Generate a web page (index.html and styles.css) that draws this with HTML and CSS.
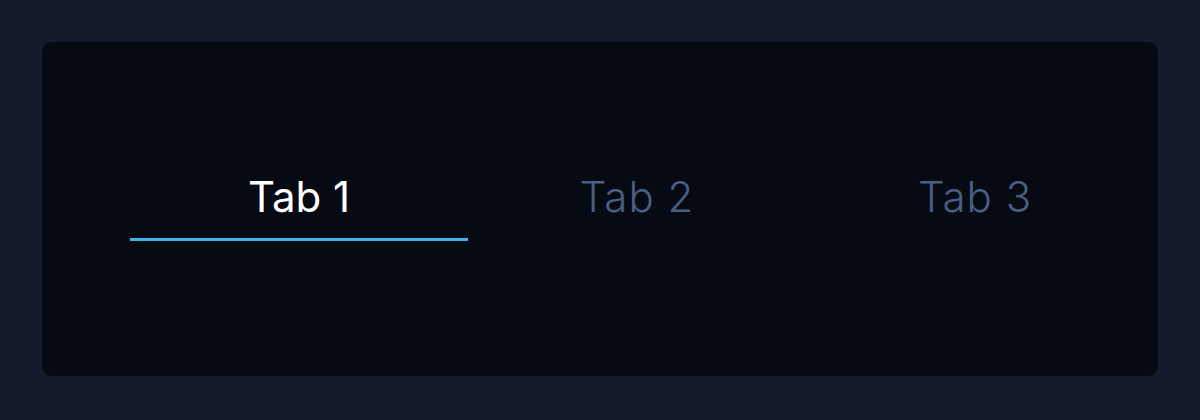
FILE: index.html
```html
<!DOCTYPE html>
<html lang="en">
<head>
<meta charset="utf-8">
<title>Tabs</title>
<link rel="stylesheet" href="styles.css">
</head>
<body>
  <div class="card">
    <div class="tabs" role="tablist">
      <button class="tab active" role="tab">Tab 1</button>
      <button class="tab" role="tab">Tab 2</button>
      <button class="tab" role="tab">Tab 3</button>
    </div>
  </div>
</body>
</html>
```

FILE: styles.css
```css
html, body {
  margin: 0;
  padding: 0;
}
body {
  background: #131b2d;
  padding: 42px;
  width: 1200px;
  height: 420px;
  box-sizing: border-box;
  font-family: Inter, "Noto Sans", sans-serif;
}
.card {
  background: #060a12;
  border-radius: 10px;
  height: 334px;
  box-sizing: border-box;
  padding: 130px 0 0 88px;
}
.tabs {
  display: grid;
  grid-template-columns: repeat(3, 338px);
}
.tab {
  background: none;
  border: 0;
  border-bottom: 3px solid transparent;
  padding: 0 0 16px 0;
  margin: 0;
  font-family: inherit;
  font-size: 42px;
  line-height: 50px;
  font-weight: 300;
  letter-spacing: 1px;
  color: #4a5e84;
  text-align: center;
  cursor: pointer;
}
.tab.active {
  color: #ffffff;
  font-weight: 400;
  letter-spacing: 0;
  border-bottom-color: #42b2e4;
}
```
